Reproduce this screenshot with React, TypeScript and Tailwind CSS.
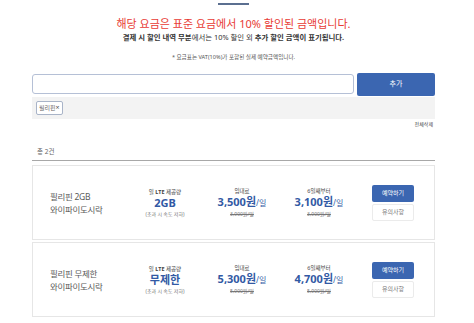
import React from "react";

type Plan = {
  name1: string;
  name2: string;
  data: string;
  price: string;
  orig: string;
  price6: string;
};

const plans: Plan[] = [
  { name1: "필리핀 2GB", name2: "와이파이도시락", data: "2GB", price: "3,500", orig: "3,900원/일", price6: "3,100" },
  { name1: "필리핀 무제한", name2: "와이파이도시락", data: "무제한", price: "5,300", orig: "5,900원/일", price6: "4,700" },
];

function PlanCard({ p }: { p: Plan }) {
  return (
    <div className="h-[75px] border border-[#e6e6e6] flex items-center pl-[17px]">
      <div className="w-[79px] text-[8.5px] leading-[13px] text-[#5a5a5a] tracking-[-0.3px]">
        <div>{p.name1}</div>
        <div>{p.name2}</div>
      </div>
      <div className="w-[72px] flex flex-col items-center">
        <div className="text-[5.5px] leading-[8px] text-[#444]">
          일 <span className="font-bold">LTE</span> 제공량
        </div>
        <div className="text-[11px] leading-[14px] font-bold text-[#3259a4]">{p.data}</div>
        <div className="text-[5px] leading-[8px] text-[#777]">(초과 시 속도 저하)</div>
      </div>
      <div className="w-[82px] flex flex-col items-center">
        <div className="text-[5.5px] leading-[8px] text-[#444]">임대료</div>
        <div className="text-[11px] leading-[14px] font-bold text-[#3259a4] whitespace-nowrap">
          {p.price}원<span className="text-[8px] font-normal">/일</span>
        </div>
        <div className="text-[5px] leading-[8px] text-[#777] line-through">{p.orig}</div>
      </div>
      <div className="w-[72px] flex flex-col items-center">
        <div className="text-[5.5px] leading-[8px] text-[#444]">6일째부터</div>
        <div className="text-[11px] leading-[14px] font-bold text-[#3259a4] whitespace-nowrap">
          {p.price6}원<span className="text-[8px] font-normal">/일</span>
        </div>
        <div className="text-[5px] leading-[8px] text-[#777] line-through">{p.orig}</div>
      </div>
      <div className="ml-[17px] w-[42px] flex flex-col gap-[2px]">
        <div className="h-[17px] rounded-[2px] bg-[#3b66b1] text-white text-[6px] flex items-center justify-center">
          예약하기
        </div>
        <div className="h-[17px] rounded-[2px] border border-[#ebebeb] bg-white text-[#777] text-[6px] flex items-center justify-center">
          유의사항
        </div>
      </div>
    </div>
  );
}

export default function App() {
  return (
    <div className="w-[474px] h-[323px] bg-white overflow-hidden font-['Noto_Sans','Noto_Sans_CJK_KR',sans-serif]">
      <div className="w-[467px]">
        <div className="pt-[3px] flex justify-center">
          <div className="w-[31px] h-[2px] bg-[#5b6f90]" />
        </div>
        <div className="mt-[12px] text-center text-[11px] leading-[14px] text-[#e83b35] whitespace-nowrap">
          해당 요금은 표준 요금에서 10% 할인된 금액입니다.
        </div>
        <div className="mt-[1px] text-center text-[7.4px] leading-[10px] text-[#333] whitespace-nowrap">
          <span className="font-bold">결제 시 할인 내역 부분</span>에서는 10% 할인 외{" "}
          <span className="font-bold">추가 할인 금액이 표기됩니다.</span>
        </div>
        <div className="mt-[11px] text-center text-[5.6px] leading-[8px] text-[#555] whitespace-nowrap">
          * 요금표는 VAT(10%)가 포함된 실제 예약금액입니다.
        </div>
        <div className="px-[32px] mt-[12px]">
          <div className="flex gap-[3px] items-start">
            <div className="flex-1 h-[20px] mt-[1px] rounded-[3px] border border-[#b5c0d6] bg-white" />
            <div className="w-[78px] h-[23px] rounded-[2px] bg-[#3b66b1] text-white text-[7px] flex items-center justify-center">
              추가
            </div>
          </div>
          <div className="mt-[1px] h-[22px] bg-[#f3f3f3] flex items-center px-[4px]">
            <div className="h-[14px] px-[2px] rounded-[2px] border border-[#a9b4c8] bg-white text-[6px] text-[#666] flex items-center">
              필리핀<span className="text-[7px] text-[#555]">×</span>
            </div>
          </div>
          <div className="mt-[2px] text-right pr-[2px] text-[5px] leading-[7px] text-[#444]">전체삭제</div>
          <div className="mt-[19px] pl-[5px] text-[6.5px] leading-[9px] text-[#666]">총 2건</div>
          <div className="mt-[4px] h-[1px] bg-[#a8a8a8]" />
          <div className="mt-[4px] flex flex-col gap-[2px]">
            {plans.map((p) => (
              <PlanCard key={p.name1} p={p} />
            ))}
          </div>
        </div>
      </div>
    </div>
  );
}
